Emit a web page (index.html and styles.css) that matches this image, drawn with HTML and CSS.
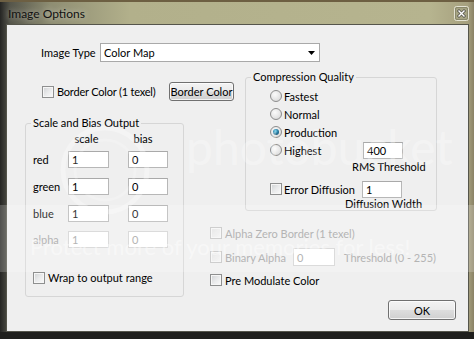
FILE: index.html
```html
<!DOCTYPE html>
<html>
<head>
<meta charset="utf-8">
<link rel="stylesheet" href="styles.css">
</head>
<body>
<div class="window">
  <div class="titlebar">
    <span class="title">Image Options</span>
    <span class="close">
      <svg width="15" height="15" viewBox="0 0 15 15">
        <rect x="0.5" y="0.5" width="14" height="14" rx="2" fill="#a6a483" stroke="#e4e3d3"/>
        <rect x="1.5" y="1.5" width="12" height="12" rx="1.5" fill="none" stroke="#8a886b"/>
        <path d="M5 5 L10 10 M10 5 L5 10" stroke="#55544a" stroke-width="3" stroke-linecap="square"/>
        <path d="M5 5 L10 10 M10 5 L5 10" stroke="#ffffff" stroke-width="1.4" stroke-linecap="square"/>
      </svg>
    </span>
  </div>
  <div class="client">
    <div class="type-row">
      <span class="type-label">Image Type</span>
      <div class="select">
        <span>Color Map</span>
        <svg width="7" height="4" viewBox="0 0 7 4"><path d="M0 0 H7 L3.5 4 Z" fill="#000"/></svg>
      </div>
    </div>
    <div class="main">
      <div class="border-row">
        <span class="check"></span>
        <span class="ctext">Border Color (1 texel)</span>
        <button class="btn border-btn">Border Color</button>
      </div>

      <fieldset class="group comp">
        <legend>Compression Quality</legend>
        <div class="opt first"><span class="radio"></span>Fastest</div>
        <div class="opt"><span class="radio"></span>Normal</div>
        <div class="opt"><span class="radio on"></span>Production</div>
        <div class="opt field-row">
          <span class="opt-label"><span class="radio"></span>Highest</span>
          <span class="input w40">400</span>
        </div>
        <div class="caption rms">RMS Threshold</div>
        <div class="opt field-row diff">
          <span class="opt-label"><span class="check"></span>Error Diffusion</span>
          <span class="input w40 diff-input">1</span>
        </div>
        <div class="caption dw">Diffusion Width</div>
      </fieldset>

      <fieldset class="group scale">
        <legend>Scale and Bias Output</legend>
        <div class="sb-grid">
          <span></span><span class="hd hd-scale">scale</span><span class="hd hd-bias">bias</span>
          <span class="lbl">red</span><span class="input sv">1</span><span class="input bv">0</span>
          <span class="lbl">green</span><span class="input sv">1</span><span class="input bv">0</span>
          <span class="lbl">blue</span><span class="input sv">1</span><span class="input bv">0</span>
          <span class="lbl dis">alpha</span><span class="input sv dis">1</span><span class="input bv dis">0</span>
        </div>
        <div class="check-row wrap"><span class="check"></span>Wrap to output range</div>
      </fieldset>

      <div class="lower">
        <div class="check-row dis"><span class="check dis"></span>Alpha Zero Border (1 texel)</div>
        <div class="check-row dis binary">
          <span class="check dis"></span>
          <span class="bl">Binary Alpha</span>
          <span class="input dis th-input">0</span>
          <span class="th">Threshold (0 - 255)</span>
        </div>
        <div class="check-row pre"><span class="check"></span>Pre Modulate Color</div>
      </div>
    </div>
    <div class="footer">
      <button class="btn ok">OK</button>
    </div>
  </div>

  <div class="wm-logo" aria-hidden="true">
    <svg width="100" height="100" viewBox="0 0 100 100"><circle cx="50" cy="50" r="42" fill="none" stroke="#ffffff" stroke-opacity="0.3" stroke-width="5"/><circle cx="50" cy="50" r="30" fill="none" stroke="#ffffff" stroke-opacity="0.18" stroke-width="3"/></svg>
  </div>
  <div class="wm-word" aria-hidden="true">photobucket</div>
  <div class="wm-band" aria-hidden="true"><span>Protect more of your memories for less!</span></div>
</div>
</body>
</html>
```

FILE: styles.css
```css
* { box-sizing: border-box; }
html, body { margin: 0; padding: 0; }
body {
  width: 474px;
  height: 339px;
  overflow: hidden;
  font-family: "Lato", "Open Sans", sans-serif;
  font-size: 11px;
  color: #000;
  background: #222;
}

.window {
  position: relative;
  width: 474px;
  height: 339px;
  display: flex;
  flex-direction: column;
  padding: 0 5px 0 6px;
  background: linear-gradient(90deg, #252523 0, #3a3a35 4px, #55554a 10px, #8e8d72 50px, #b2b08b 130px, #b6b48f 430px, #a6a07e 468px, #8a8266 474px);
  border-bottom: 7px solid #1f1f1d;
}

.titlebar {
  height: 24px;
  margin: 0 -5px 0 -6px;
  padding: 0 5px 0 8px;
  border-top: 2px solid #6d5f42;
  display: flex;
  align-items: center;
  justify-content: space-between;
}
.title {
  font-size: 12px;
  color: #111;
  text-shadow: 0 0 6px rgba(255,255,255,0.6);
}
.close { display: flex; margin-top: 1px; }

.client {
  flex: 1;
  background: #efefef;
  border: 1px solid #55554b;
  display: flex;
  flex-direction: column;
}

.type-row {
  display: flex;
  align-items: center;
  height: 19px;
  margin: 18px 0 0 34px;
}
.type-label { width: 59px; }
.select {
  width: 220px;
  height: 19px;
  background: #fff;
  border: 1px solid #a9a9a9;
  display: flex;
  align-items: center;
  justify-content: space-between;
  padding: 0 4px 0 3px;
}

.main {
  display: grid;
  grid-template-columns: 159px 26px 35px 192px;
  grid-template-rows: 46px 95px 86px;
  margin: 8px 0 0 18px;
}

.border-row {
  grid-column: 1 / 4;
  grid-row: 1;
  align-self: start;
  display: flex;
  align-items: center;
  height: 19px;
  margin-top: 12px;
  padding: 0 11px 0 17px;
}
.ctext { margin-left: 3px; letter-spacing: -0.2px; }
.border-btn { margin-left: auto; width: 65px; height: 19px; }

.group {
  margin: 0;
  padding: 0;
  min-width: 0;
  border: 1px solid #d6d6d6;
  border-radius: 3px;
}
.group legend {
  padding: 0 2px;
  line-height: 14px;
}

.comp {
  grid-column: 4;
  grid-row: 1 / 3;
  padding-left: 24px;
}
.comp legend { margin-left: -19px; }
.scale {
  grid-column: 1;
  grid-row: 2 / 4;
  padding-left: 7px;
}
.scale legend { margin-left: -2px; }
.lower {
  grid-column: 3 / 5;
  grid-row: 3;
  padding-top: 15px;
}

.opt {
  display: flex;
  align-items: center;
  height: 18px;
}
.opt.first { margin-top: 3px; }
.opt-label { display: flex; align-items: center; }
.field-row {
  display: grid;
  grid-template-columns: 93px 40px;
  align-items: center;
}
.diff { margin-top: 5px; }
.diff-input { margin-left: -1px; }
.caption { line-height: 16px; height: 16px; }
.rms { padding-left: 82px; }
.dw { padding-left: 75px; height: 12px; line-height: 12px; }

.radio {
  width: 12px;
  height: 12px;
  border-radius: 50%;
  border: 1px solid #8d8d8d;
  background: radial-gradient(circle at 40% 35%, #fbfbfb 0, #e6e6e6 55%, #cfcfcf 100%);
  margin-right: 2px;
  flex: none;
  display: flex;
  align-items: center;
  justify-content: center;
}
.radio.on::after {
  content: "";
  width: 6px;
  height: 6px;
  border-radius: 50%;
  background: radial-gradient(circle at 40% 35%, #8ee0f5 0, #2a7fa6 45%, #103f5c 100%);
}

.check {
  width: 12px;
  height: 12px;
  flex: none;
  border: 1px solid #8e8f8f;
  background: linear-gradient(135deg, #cfd1d3 0, #e9eaeb 50%, #fbfbfb 100%);
  box-shadow: inset 0 0 0 1px #f6f6f6;
}
.check.dis {
  border-color: #c2c2c2;
  background: linear-gradient(135deg, #e2e2e2 0, #f4f4f4 100%);
}
.opt .check { margin-right: 2px; }

.input {
  height: 17px;
  background: #fff;
  border: 1px solid #b7b7b7;
  border-top-color: #a9a9a9;
  padding-left: 3px;
  display: flex;
  align-items: center;
}
.w40 { width: 40px; }
.input.dis { color: #a2a2a2; border-color: #d2d2d2; }

.sb-grid {
  display: grid;
  grid-template-columns: 35px 60px 40px;
  grid-template-rows: 16px 27px 27px 26px 27px;
  align-items: center;
}
.hd { align-self: end; line-height: 14px; }
.hd-scale { width: 41px; text-align: center; padding-right: 4px; }
.hd-bias { text-align: center; padding-right: 10px; }
.lbl { align-self: center; }
.lbl.dis { color: #a2a2a2; }
.sv { width: 41px; }
.bv { width: 40px; }

.check-row {
  display: flex;
  align-items: center;
  height: 14px;
}
.check-row .check { margin-right: 3px; }
.wrap { margin-top: 18px; height: 13px; }
.check-row.dis { color: #a2a2a2; }
.binary { margin-top: 8px; height: 18px; }
.bl { width: 68px; }
.th-input { width: 42px; height: 18px; }
.th { margin-left: 9px; }
.pre { margin-top: 7px; color: #000; }

.footer {
  display: flex;
  justify-content: flex-end;
  margin-top: 3px;
  padding-right: 12px;
}

.btn {
  font: inherit;
  color: #000;
  padding: 0;
  border: 1px solid #707070;
  border-radius: 3px;
  background: linear-gradient(#f3f3f3 0, #ebebeb 48%, #dddddd 52%, #cfcfcf 100%);
  box-shadow: inset 0 0 0 1px rgba(255,255,255,0.75);
}
.ok { width: 68px; height: 20px; }

.wm-logo {
  position: absolute;
  left: 55px;
  top: 120px;
  pointer-events: none;
}
.wm-word {
  position: absolute;
  left: 186px;
  top: 122px;
  font-size: 48px;
  line-height: 50px;
  color: rgba(255,255,255,0.3);
  pointer-events: none;
}
.wm-band {
  position: absolute;
  left: 0;
  top: 205px;
  width: 474px;
  height: 67px;
  background: rgba(255,255,255,0.2);
  pointer-events: none;
  padding: 31px 0 0 30px;
}
.wm-band span {
  display: block;
  font-size: 22px;
  line-height: 22px;
  white-space: nowrap;
  color: rgba(255,255,255,0.45);
}
```
